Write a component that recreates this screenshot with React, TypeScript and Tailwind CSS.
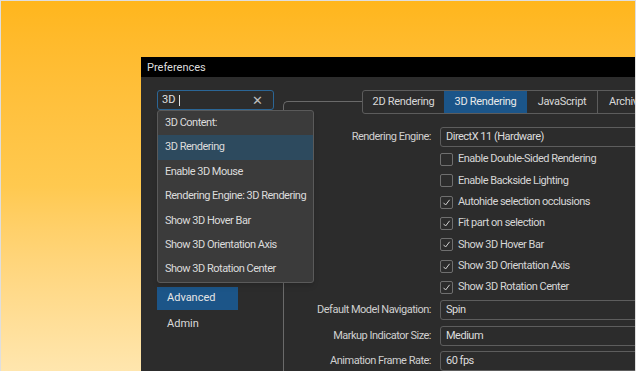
import React from "react";

const font = { fontFamily: "Roboto, 'Liberation Sans', sans-serif" };

const Check = () => (
  <svg width="9" height="9" viewBox="0 0 9 9" fill="none">
    <path d="M1.5 4.8 L3.6 7 L7.6 1.8" stroke="#cfcfcf" strokeWidth="1" />
  </svg>
);

const CheckRow: React.FC<{ label: string; checked?: boolean }> = ({ label, checked }) => (
  <div className="flex items-center h-[21.33px]">
    <div className="w-[13px] h-[13px] rounded-[2px] border border-[#6f6f6f] flex items-center justify-center">
      {checked && <Check />}
    </div>
    <span className="ml-[5px] text-[11px] tracking-[-0.5px] text-[#d6d6d6] whitespace-nowrap">
      {label}
    </span>
  </div>
);

const ComboRow: React.FC<{ label: string; value: string; className?: string }> = ({
  label,
  value,
  className = "",
}) => (
  <div className={`flex items-center ${className}`}>
    <div className="w-[147px] shrink-0 text-right text-[11px] tracking-[-0.5px] text-[#d0d0d0] whitespace-nowrap">
      {label}
    </div>
    <div className="ml-[9px] h-[20px] w-[260px] shrink-0 rounded-[3px] border border-[#5d5d5d] flex items-center pl-[5px] text-[11px] tracking-[-0.5px] text-[#dcdcdc]">
      {value}
    </div>
  </div>
);

const dropdownItems = [
  "3D Content:",
  "3D Rendering",
  "Enable 3D Mouse",
  "Rendering Engine: 3D Rendering",
  "Show 3D Hover Bar",
  "Show 3D Orientation Axis",
  "Show 3D Rotation Center",
];

export default function App() {
  return (
    <div
      className="w-[636px] h-[371px] overflow-hidden border-l border-t border-r border-[#dedede] bg-gradient-to-b from-[#ffb61c] via-[#ffc94f] to-[#ffe6ae] pt-[56px] pl-[140px]"
      style={font}
    >
      <div className="w-[600px] h-[340px] flex flex-col">
        <div className="h-[20px] bg-black text-[11px] text-[#dedede] pl-[6px] pt-[3px] flex items-center">
          Preferences
        </div>
        <div className="flex-1 bg-[#2c2c2c] flex relative">
          {/* left column */}
          <div className="w-[142px] shrink-0 pl-[16px] pt-[13px]">
            <div className="w-[117px] h-[20px] rounded-[3px] border border-[#2b6696] flex items-center pl-[4px] pr-[10px] text-[11px] text-[#e0e0e0]">
              <span>3D</span>
              <span className="ml-[4px] w-px h-[11px] bg-[#e0e0e0]" />
              <span className="ml-auto text-[#bdbdbd] text-[13px] leading-none">✕</span>
            </div>
            <div className="mt-[177px] flex flex-col">
              <div className="w-[81px] h-[23px] bg-[#1c5588] text-[11px] text-[#e6e6e6] flex items-center pl-[10px]">
                Advanced
              </div>
              <div className="h-[28px] text-[11px] text-[#dadada] flex items-center pl-[10px]">
                Admin
              </div>
            </div>
          </div>

          {/* dropdown */}
          <div className="absolute left-[16px] top-[33px] w-[157px] rounded-[3px] border border-[#5a5a5a] bg-[#3b3b3b] shadow-md">
            {dropdownItems.map((item, i) => (
              <div
                key={item}
                className={`h-[24.4px] flex items-center pl-[7px] text-[11px] tracking-[-0.5px] text-[#dcdcdc] whitespace-nowrap ${
                  i === 1 ? "bg-[#2d4a5e]" : ""
                }`}
              >
                {item}
              </div>
            ))}
          </div>

          {/* right column */}
          <div className="flex-1 pt-[24px]">
            <div className="border-l border-t border-[#6a6a6a] rounded-tl-[5px] h-full">
              <div className="-mt-[12px] ml-[78px] flex h-[24px] w-fit rounded-[3px] border border-[#5c5c5c] bg-[#2c2c2c] text-[11px] tracking-[-0.3px] text-[#d8d8d8]">
                <div className="w-[81px] flex items-center justify-center">2D Rendering</div>
                <div className="w-[83px] flex items-center justify-center bg-[#1b5589] text-[#eaeaea]">
                  3D Rendering
                </div>
                <div className="w-[71px] flex items-center justify-center border-r border-[#5c5c5c]">
                  JavaScript
                </div>
                <div className="w-[70px] flex items-center pl-[11px] whitespace-nowrap">Archive</div>
              </div>
              <div className="pt-[13px] flex flex-col">
                <ComboRow label="Rendering Engine:" value="DirectX 11 (Hardware)" />
                <div className="ml-[156px] mt-[2px] flex flex-col">
                  <CheckRow label="Enable Double-Sided Rendering" />
                  <CheckRow label="Enable Backside Lighting" />
                  <CheckRow label="Autohide selection occlusions" checked />
                  <CheckRow label="Fit part on selection" checked />
                  <CheckRow label="Show 3D Hover Bar" checked />
                  <CheckRow label="Show 3D Orientation Axis" checked />
                  <CheckRow label="Show 3D Rotation Center" checked />
                </div>
                <ComboRow label="Default Model Navigation:" value="Spin" className="mt-[2px]" />
                <ComboRow label="Markup Indicator Size:" value="Medium" className="mt-[6px]" />
                <ComboRow label="Animation Frame Rate:" value="60 fps" className="mt-[5px]" />
              </div>
            </div>
          </div>
        </div>
      </div>
    </div>
  );
}
